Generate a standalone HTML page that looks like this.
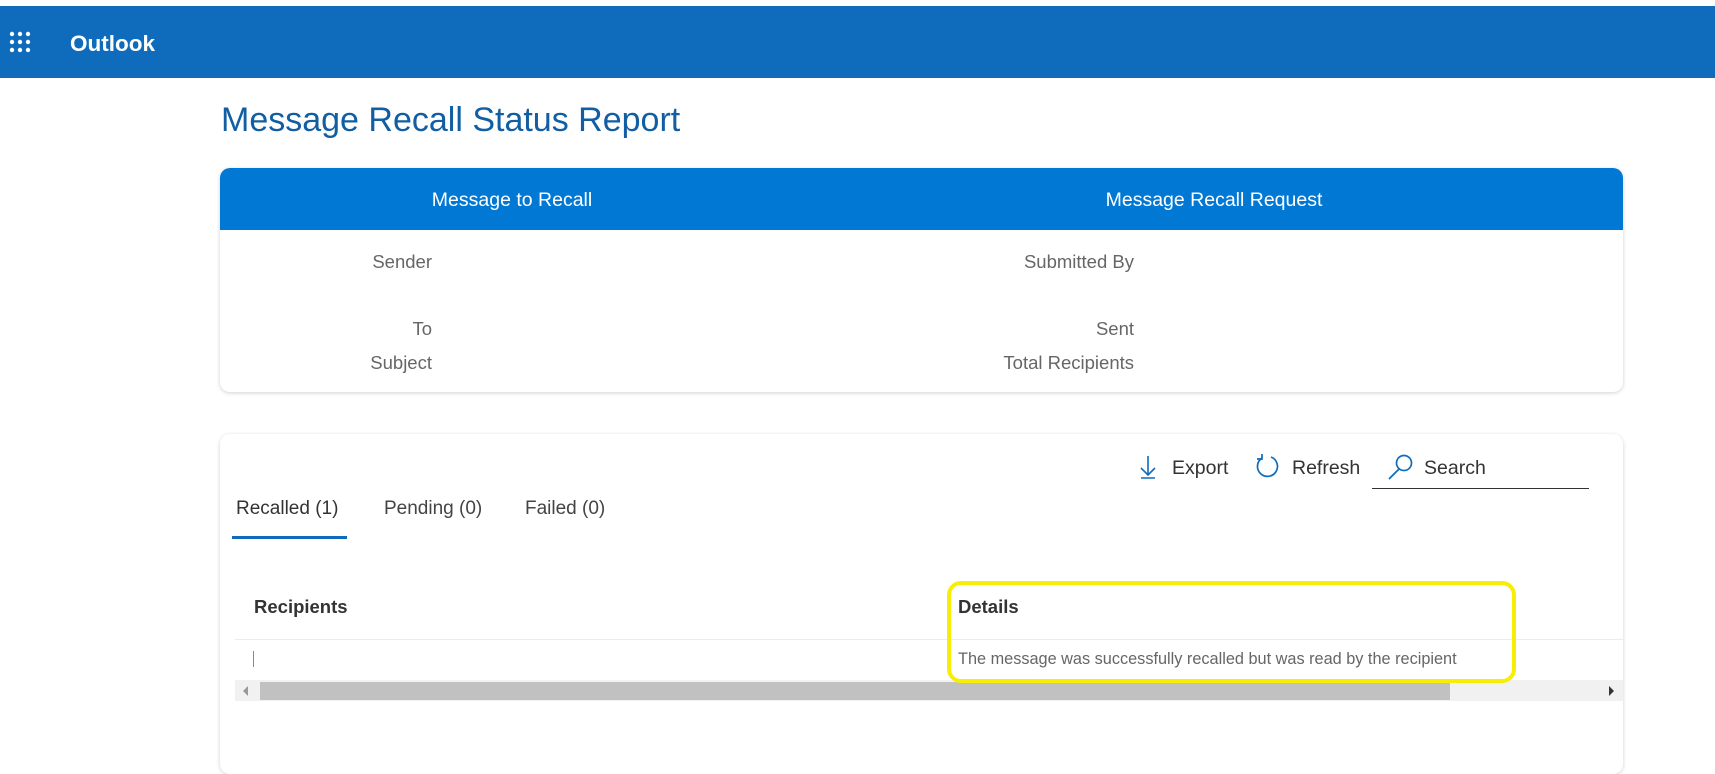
<!DOCTYPE html>
<html><head><meta charset="utf-8"><style>
*{margin:0;padding:0;box-sizing:border-box}
body{width:1715px;height:726px;overflow:hidden;background:#fff;font-family:"Liberation Sans",sans-serif;position:relative}
.a{position:absolute;white-space:nowrap}
.hdr{position:absolute;left:0;top:6px;width:1715px;height:72px;background:#0f6cbd}
.card{position:absolute;left:220px;width:1403px;background:#fff;border-radius:10px;box-shadow:0 1px 4px rgba(0,0,0,.18)}
.lbl{font-size:18.5px;color:#666;text-align:right}
</style></head><body>
<div class="hdr"></div>
<svg class="a" style="left:9px;top:31px" width="26" height="24">
<g fill="#fff"><circle cx="3" cy="3" r="2.2"/><circle cx="11" cy="3" r="2.2"/><circle cx="19" cy="3" r="2.2"/>
<circle cx="3" cy="11" r="2.2"/><circle cx="11" cy="11" r="2.2"/><circle cx="19" cy="11" r="2.2"/>
<circle cx="3" cy="19" r="2.2"/><circle cx="11" cy="19" r="2.2"/><circle cx="19" cy="19" r="2.2"/></g></svg>
<div class="a" style="left:70px;top:31px;font-size:22.5px;font-weight:bold;color:#fff">Outlook</div>
<div class="a" style="left:221px;top:101px;font-size:34px;color:#115ea3">Message Recall Status Report</div>

<div class="card" style="top:168px;height:224px">
<div style="height:62px;background:#0078d4;border-radius:10px 10px 0 0"></div>
</div>
<div class="a" style="left:512px;top:189px;transform:translateX(-50%);font-size:19.5px;color:#fff">Message to Recall</div>
<div class="a" style="left:1214px;top:189px;transform:translateX(-50%);font-size:19.5px;color:#fff">Message Recall Request</div>
<div class="a lbl" style="right:1283px;top:251px">Sender</div>
<div class="a lbl" style="right:1283px;top:318px">To</div>
<div class="a lbl" style="right:1283px;top:352px">Subject</div>
<div class="a lbl" style="right:581px;top:251px">Submitted By</div>
<div class="a lbl" style="right:581px;top:318px">Sent</div>
<div class="a lbl" style="right:581px;top:352px">Total Recipients</div>

<div class="card" style="top:434px;height:340px"></div>
<svg class="a" style="left:1138px;top:454px" width="20" height="26"><path d="M10 2V21M3 14l7 7 7-7M3 24h14" stroke="#0f6cbd" stroke-width="1.6" fill="none"/></svg>
<div class="a" style="left:1172px;top:457px;font-size:19.5px;color:#333">Export</div>
<svg class="a" style="left:1253px;top:453px" width="28" height="28"><path d="M9 5A10 10 0 1 0 18 4" stroke="#0f6cbd" stroke-width="1.7" fill="none"/><path d="M9 1v5H4" stroke="#0f6cbd" stroke-width="1.7" fill="none"/></svg>
<div class="a" style="left:1292px;top:457px;font-size:19.5px;color:#333">Refresh</div>
<svg class="a" style="left:1387px;top:453px" width="28" height="28"><circle cx="17" cy="10" r="7.5" stroke="#0f6cbd" stroke-width="1.7" fill="none"/><path d="M12 16L2 26" stroke="#0f6cbd" stroke-width="1.8"/></svg>
<div class="a" style="left:1424px;top:457px;font-size:19.5px;color:#333">Search</div>
<div class="a" style="left:1372px;top:488px;width:217px;height:1px;background:#333"></div>

<div class="a" style="left:236px;top:498px;font-size:19px;color:#333">Recalled (1)</div>
<div class="a" style="left:384px;top:498px;font-size:19px;color:#444">Pending (0)</div>
<div class="a" style="left:525px;top:498px;font-size:19px;color:#444">Failed (0)</div>
<div class="a" style="left:232px;top:536px;width:115px;height:3px;background:#0f6cbd"></div>

<div class="a" style="left:254px;top:596px;font-size:18.5px;font-weight:bold;color:#333">Recipients</div>
<div class="a" style="left:958px;top:596px;font-size:18.5px;font-weight:bold;color:#333">Details</div>
<div class="a" style="left:235px;top:639px;width:1388px;height:1px;background:#ececec"></div>
<div class="a" style="left:253px;top:651px;width:1px;height:16px;background:#888"></div>
<div class="a" style="left:958px;top:650px;font-size:16.3px;color:#666">The message was successfully recalled but was read by the recipient</div>
<div class="a" style="left:235px;top:680px;width:1388px;height:21px;background:#f1f1f1"></div>
<div class="a" style="left:260px;top:682px;width:1190px;height:18px;background:#c1c1c1"></div>
<svg class="a" style="left:242px;top:685px" width="8" height="12"><path d="M6 1L1 6l5 5z" fill="#999"/></svg>
<svg class="a" style="left:1607px;top:685px" width="8" height="12"><path d="M2 1l5 5-5 5z" fill="#333"/></svg>
<div class="a" style="left:947px;top:581px;width:569px;height:102px;border:4px solid #f7ee05;border-radius:14px"></div>
</body></html>
